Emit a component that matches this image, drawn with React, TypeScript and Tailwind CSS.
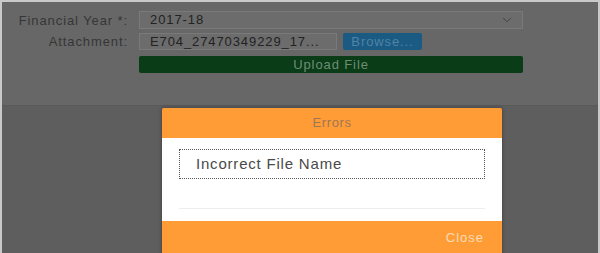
import { ChevronDown } from "lucide-react";

export default function App() {
  return (
    <div
      className="relative w-[600px] h-[253px] overflow-hidden bg-[#5e5e5e] border-2 border-b-0 border-[#c9c9c9]"
      style={{ fontFamily: '"Liberation Sans", Arial, sans-serif' }}
    >
      {/* Form (behind the backdrop) */}
      <div className="h-[104px] bg-[#676767] border-b border-[#5a5a5a] pt-[9px]">
        <div className="grid grid-cols-[126px_384px] gap-x-[11px] gap-y-[4px] items-center tracking-[0.9px]">
          <label className="text-right text-[13px] leading-[17px] text-[#363636]">Financial Year *:</label>
          <div className="h-[18px] flex items-center justify-between pl-[10px] pr-[8px] bg-[#6c6c6c] border border-[#7a7a7a] text-[13px] text-[#222222]">
            <span>2017-18</span>
            <ChevronDown className="w-[14px] h-[14px] text-[#3a3a3a]" strokeWidth={1.5} />
          </div>

          <label className="text-right text-[13px] leading-[17px] text-[#363636]">Attachment:</label>
          <div className="flex items-center gap-[6px]">
            <div className="w-[198px] h-[17px] flex items-center pl-[10px] bg-[#6c6c6c] border border-[#7a7a7a] text-[13px] text-[#222222] whitespace-nowrap overflow-hidden">
              E704_27470349229_17...
            </div>
            <button className="w-[79px] h-[17px] flex items-center justify-center rounded-[2px] bg-[#1b5a82] text-[13px] text-[#4f83a8]">
              Browse...
            </button>
          </div>

          <div />
          <button className="mt-[2px] h-[17px] flex items-center justify-center rounded-[2px] bg-[#093c17] text-[13px] text-[#6f8d76]">
            Upload File
          </button>
        </div>
      </div>

      {/* Error modal */}
      <div className="absolute left-[160px] top-[106px] w-[340px] flex flex-col shadow-[0_0_4px_rgba(0,0,0,0.35)]">
        <div className="h-[30px] flex items-center justify-center bg-[#ff9c35] rounded-t-[2px] text-[13px] tracking-[0.6px] text-[#a07658]">
          Errors
        </div>
        <div className="h-[83px] bg-white px-[17px] pt-[11px] flex flex-col">
          <div className="h-[30px] flex items-center pl-[16px] border border-dotted border-[#555555] text-[15px] tracking-[0.8px] text-[#4a4a4a]">
            Incorrect File Name
          </div>
          <div className="mt-[29px] border-t border-[#eeeeee]" />
        </div>
        <div className="h-[40px] bg-[#ff9c35] flex items-start justify-end pt-[7px] pr-[18px]">
          <span className="text-[13px] tracking-[1px] text-[#f6dcb6]">Close</span>
        </div>
      </div>
    </div>
  );
}
